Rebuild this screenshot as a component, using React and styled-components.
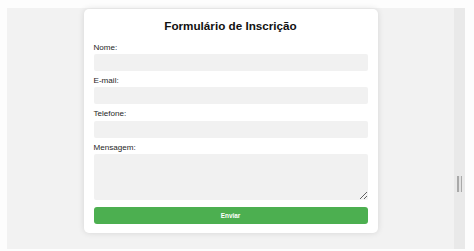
import React from "react";
import styled, { createGlobalStyle } from "styled-components";

const Global = createGlobalStyle`
  html, body { margin: 0; padding: 0; background: #fdfdfd; }
  body { font-family: "Liberation Sans", Arial, sans-serif; }
  * { box-sizing: border-box; }
`;

const Frame = styled.div`
  margin: 8px 0 0 7px;
  width: 458px;
  height: 241px;
  display: flex;
`;

const Viewport = styled.main`
  flex: 1;
  background: #f2f2f2;
  display: flex;
  justify-content: center;
  align-items: flex-start;
  padding-top: 1px;
`;

const ScrollStrip = styled.div`
  width: 11px;
  background: #e9e9e9;
  display: flex;
  justify-content: center;
  padding-top: 168px;
`;

const Grip = styled.div`
  width: 5px;
  height: 16px;
  display: flex;
  justify-content: space-between;
  background: #e2e2e2;
`;

const GripLine = styled.span`
  width: 1.5px;
  height: 100%;
  background: #a9a9a9;
`;

const Card = styled.form`
  width: 294px;
  background: #ffffff;
  border-radius: 5px;
  box-shadow: 0 0 6px rgba(0, 0, 0, 0.12);
  padding: 10px 10px 9px;
`;

const Title = styled.h2`
  margin: 0 0 10.5px;
  font-size: 11.7px;
  font-weight: bold;
  text-align: center;
  color: #111;
  line-height: normal;
`;

const Label = styled.label`
  display: block;
  font-size: 8.1px;
  color: #1e1e1e;
  line-height: normal;
  margin-bottom: 2.5px;
`;

const Field = styled.input`
  display: block;
  width: 100%;
  height: 17px;
  border: none;
  border-radius: 2px;
  background: #f1f1f1;
  margin: 0 0 4.9px;
  padding: 0 5px;
  font-family: inherit;
  font-size: 8px;
`;

const Area = styled.textarea`
  display: block;
  width: 100%;
  height: 46px;
  border: none;
  border-radius: 2px;
  background: #f1f1f1;
  margin: 1.8px 0 7px;
  padding: 4px 5px;
  font-family: inherit;
  font-size: 8px;
`;

const Submit = styled.button`
  display: block;
  width: 100%;
  height: 17px;
  border: none;
  border-radius: 3px;
  background: #4caf50;
  color: #fff;
  font-family: inherit;
  font-weight: bold;
  font-size: 6.4px;
  padding: 0;
  cursor: pointer;
`;

const fields = [
  { id: "nome", label: "Nome:", type: "text" },
  { id: "email", label: "E-mail:", type: "email" },
  { id: "telefone", label: "Telefone:", type: "tel" },
];

export default function App() {
  return (
    <>
      <Global />
      <Frame>
        <Viewport>
          <Card onSubmit={(e) => e.preventDefault()}>
            <Title>Formulário de Inscrição</Title>
            {fields.map((f) => (
              <React.Fragment key={f.id}>
                <Label htmlFor={f.id}>{f.label}</Label>
                <Field id={f.id} type={f.type} />
              </React.Fragment>
            ))}
            <Label htmlFor="mensagem">Mensagem:</Label>
            <Area id="mensagem" />
            <Submit type="submit">Enviar</Submit>
          </Card>
        </Viewport>
        <ScrollStrip>
          <Grip>
            <GripLine />
            <GripLine />
          </Grip>
        </ScrollStrip>
      </Frame>
    </>
  );
}
